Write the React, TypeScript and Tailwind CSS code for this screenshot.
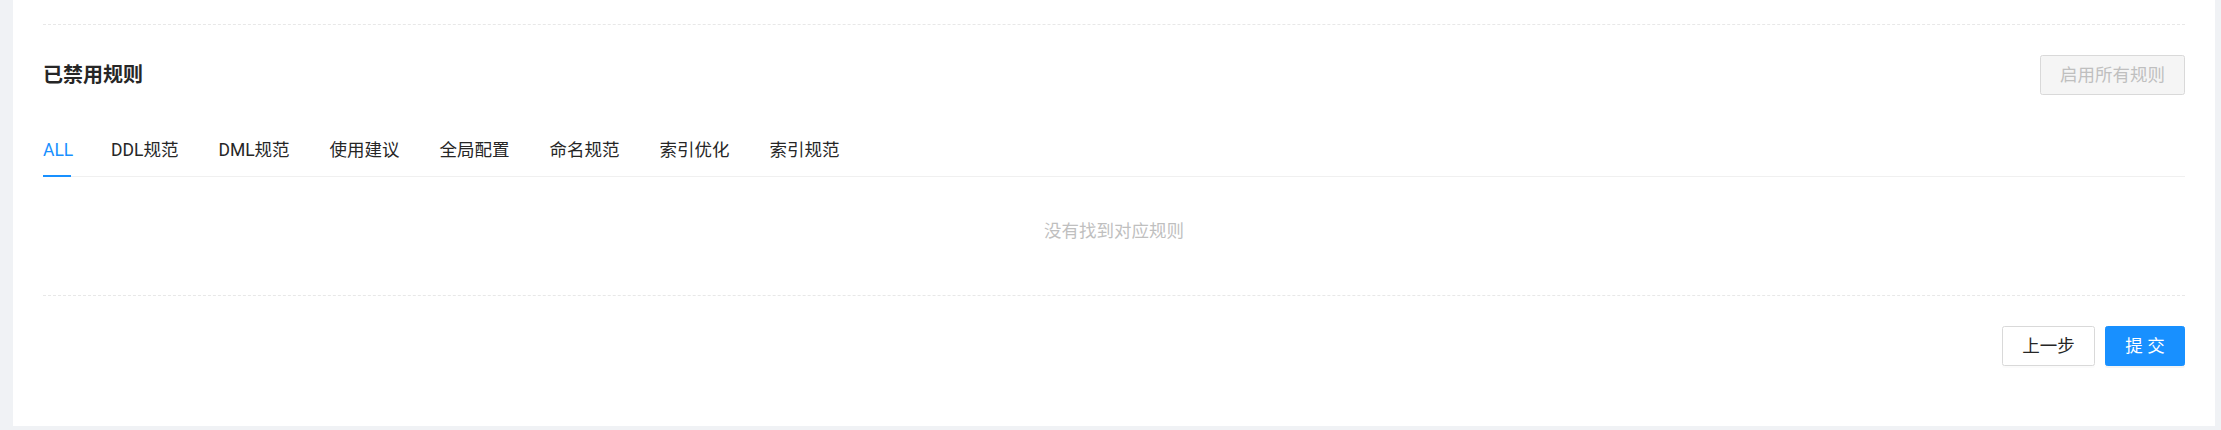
import React from "react";

const tabs = ["ALL", "DDL规范", "DML规范", "使用建议", "全局配置", "命名规范", "索引优化", "索引规范"];

export default function App() {
  return (
    <div
      className="w-[2221px] h-[430px] bg-[#f0f2f5] pl-[13px] pr-[6px] pb-[4px]"
      style={{ fontFamily: 'Roboto, "Noto Sans CJK SC", sans-serif' }}
    >
      <div className="bg-white h-full px-[30px] flex flex-col">
        <div className="mt-[24px] border-t border-dashed border-[#e8e8e8]" />
        <div className="mt-[30px] h-[40px] flex items-center justify-between">
          <div className="text-[20px] leading-[28px] font-semibold text-[#262626]">已禁用规则</div>
          <button className="w-[145px] h-[40px] rounded-[2.5px] border border-[#d9d9d9] bg-[#f5f5f5] text-[17.5px] text-[#bfbfbf] cursor-not-allowed">
            启用所有规则
          </button>
        </div>
        <div className="mt-[24px] h-[58px] border-b border-[#f0f0f0] flex items-end gap-[40px]">
          {tabs.map((t, i) => (
            <div
              key={t}
              className={
                i === 0
                  ? "relative w-[28px] pb-[12px] text-[17.5px] leading-[27.5px] whitespace-nowrap text-[#1890ff]"
                  : "relative pb-[12px] text-[17.5px] leading-[27.5px] whitespace-nowrap text-[#262626]"
              }
            >
              {t}
              {i === 0 && <div className="absolute left-0 right-0 bottom-[-1px] h-[2.5px] bg-[#1890ff]" />}
            </div>
          ))}
        </div>
        <div className="h-[118px] pt-[42px] text-center text-[17.5px] leading-[25px] text-[#bfbfbf]">
          没有找到对应规则
        </div>
        <div className="border-t border-dashed border-[#e8e8e8]" />
        <div className="mt-[30px] flex justify-end gap-[10px]">
          <button className="w-[93px] h-[40px] rounded-[2.5px] border border-[#d9d9d9] bg-white text-[17.5px] text-[#262626] shadow-[0_2px_0_rgba(0,0,0,0.016)]">
            上一步
          </button>
          <button className="w-[80px] h-[40px] rounded-[2.5px] border border-[#1890ff] bg-[#1890ff] text-[17.5px] text-white shadow-[0_2px_0_rgba(0,0,0,0.045)]">
            提 交
          </button>
        </div>
      </div>
    </div>
  );
}
